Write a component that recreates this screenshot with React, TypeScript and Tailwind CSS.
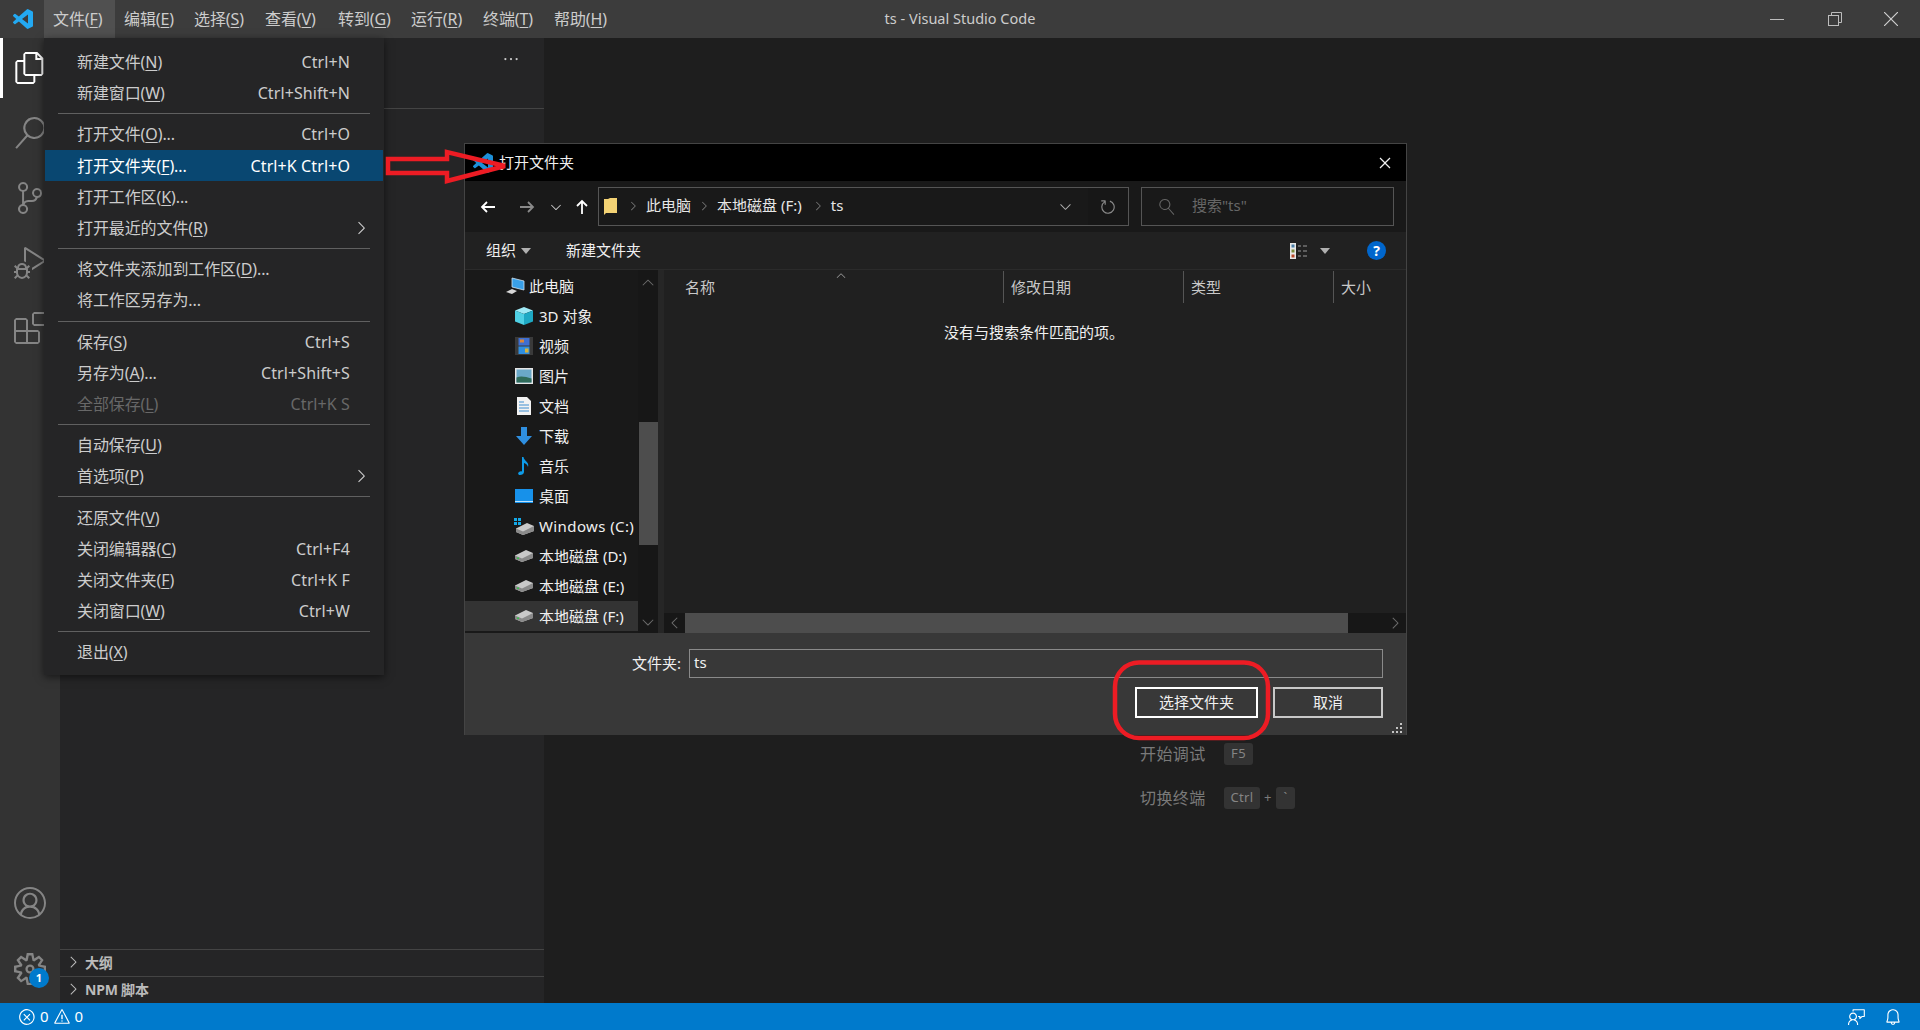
import type { ReactNode } from 'react';
import {
  VscAccount,
  VscBell,
  VscChevronDown,
  VscChevronLeft,
  VscChevronRight,
  VscChevronUp,
  VscClose,
  VscDebugAlt,
  VscEllipsis,
  VscError,
  VscExtensions,
  VscFeedback,
  VscFiles,
  VscRefresh,
  VscSearch,
  VscSettingsGear,
  VscSourceControl,
  VscWarning,
} from 'react-icons/vsc';

const FONT = 'font-["Noto_Sans","Noto_Sans_CJK_SC",sans-serif]';

const menuBar = [
  { label: '文件(F)', w: 'w-[71px]', active: true },
  { label: '编辑(E)', w: 'w-[70px]' },
  { label: '选择(S)', w: 'w-[71px]' },
  { label: '查看(V)', w: 'w-[73px]' },
  { label: '转到(G)', w: 'w-[73px]' },
  { label: '运行(R)', w: 'w-[72px]' },
  { label: '终端(T)', w: 'w-[71px]' },
  { label: '帮助(H)', w: 'w-[70px]' },
];

type MenuEntry = { label: string; key?: string; active?: boolean; disabled?: boolean; sub?: boolean } | 'sep';

const fileMenu: MenuEntry[] = [
  { label: '新建文件(N)', key: 'Ctrl+N' },
  { label: '新建窗口(W)', key: 'Ctrl+Shift+N' },
  'sep',
  { label: '打开文件(O)...', key: 'Ctrl+O' },
  { label: '打开文件夹(F)...', key: 'Ctrl+K Ctrl+O', active: true },
  { label: '打开工作区(K)...' },
  { label: '打开最近的文件(R)', sub: true },
  'sep',
  { label: '将文件夹添加到工作区(D)...' },
  { label: '将工作区另存为...' },
  'sep',
  { label: '保存(S)', key: 'Ctrl+S' },
  { label: '另存为(A)...', key: 'Ctrl+Shift+S' },
  { label: '全部保存(L)', key: 'Ctrl+K S', disabled: true },
  'sep',
  { label: '自动保存(U)' },
  { label: '首选项(P)', sub: true },
  'sep',
  { label: '还原文件(V)' },
  { label: '关闭编辑器(C)', key: 'Ctrl+F4' },
  { label: '关闭文件夹(F)', key: 'Ctrl+K F' },
  { label: '关闭窗口(W)', key: 'Ctrl+W' },
  'sep',
  { label: '退出(X)' },
];

function Mnemonic({ label }: { label: string }) {
  const m = label.match(/^(.*\()(\w)(\).*)$/);
  if (!m) return <>{label}</>;
  return (
    <>
      {m[1]}
      <u className="underline-offset-2">{m[2]}</u>
      {m[3]}
    </>
  );
}

function VsLogo({ className }: { className: string }) {
  return (
    <svg viewBox="0 0 24 24" className={className} fill="currentColor">
      <path d="M23.15 2.587L18.21.21a1.494 1.494 0 0 0-1.705.29l-9.46 8.63-4.12-3.128a.999.999 0 0 0-1.276.057L.327 7.261A1 1 0 0 0 .326 8.74L3.899 12 .326 15.26a1 1 0 0 0 .001 1.479L1.65 17.94a.999.999 0 0 0 1.276.057l4.12-3.128 9.46 8.63a1.492 1.492 0 0 0 1.704.29l4.942-2.377A1.5 1.5 0 0 0 24 20.06V3.939a1.5 1.5 0 0 0-.85-1.352zm-5.146 14.861L10.826 12l7.178-5.448v10.896z" />
    </svg>
  );
}

function TitleBar() {
  return (
    <div className="relative flex h-[38px] shrink-0 items-center bg-[#3c3c3c] text-[#cccccc]">
      <div className="flex w-[44px] justify-center pl-[1px]">
        <VsLogo className="h-[20px] w-[20px] text-[#23a9f2]" />
      </div>
      {menuBar.map((m) => (
        <div
          key={m.label}
          className={`flex h-full items-center pl-[9px] text-[16px] tracking-[-0.1px] ${m.w} ${m.active ? 'bg-[#505050]' : ''}`}
        >
          <Mnemonic label={m.label} />
        </div>
      ))}
      <div className="absolute left-[880px] w-[160px] pb-[1px] text-center text-[14.5px] whitespace-nowrap">ts - Visual Studio Code</div>
      <div className="ml-auto flex items-center">
        <svg viewBox="0 0 14 14" className="mr-[44px] h-[14px] w-[14px]" stroke="#bdbdbd" fill="none">
          <path d="M0 7.5h14" />
        </svg>
        <svg viewBox="0 0 14 14" className="mr-[42px] h-[14px] w-[14px]" stroke="#bdbdbd" fill="none">
          <rect x=".5" y="3.5" width="10" height="10" />
          <path d="M3.5 3.5v-3h10v10h-3" />
        </svg>
        <svg viewBox="0 0 14 14" className="mr-[22px] h-[14px] w-[14px]" stroke="#cfcfcf" strokeWidth="1.2" fill="none">
          <path d="M0 0l14 14M14 0L0 14" />
        </svg>
      </div>
    </div>
  );
}

function ActivityBar() {
  return (
    <div className="relative flex w-[60px] shrink-0 flex-col items-center bg-[#333333] text-[#858585]">
      <div className="absolute top-0 left-0 h-[60px] w-[3px] bg-white" />
      <VscFiles className="mt-[14px] text-white" size={32} />
      <VscSearch className="mt-[33px]" size={32} />
      <VscSourceControl className="mt-[33px]" size={32} />
      <VscDebugAlt className="mt-[33px]" size={32} />
      <VscExtensions className="mt-[33px]" size={32} />
      <VscAccount className="mt-auto" size={32} />
      <div className="relative mt-[34px] mb-[18px]">
        <VscSettingsGear size={32} />
        <div className="absolute top-[15px] left-[15px] flex h-[20px] w-[20px] items-center justify-center rounded-full bg-[#007acc] text-[11px] font-bold text-white">
          1
        </div>
      </div>
    </div>
  );
}

function SideSection({ label }: { label: string }) {
  return (
    <div className="flex h-[27px] items-center border-t border-[#444444] pb-[2px] pl-[4px] text-[14px] font-bold text-[#bbbbbb]">
      <VscChevronRight size={18} />
      <span className="ml-[3px] tracking-[-0.2px]">{label}</span>
    </div>
  );
}

function SideBar() {
  return (
    <div className="flex w-[484px] shrink-0 flex-col bg-[#252526]">
      <div className="flex h-[71px] justify-end border-b border-[#444444] pt-[12px] pr-[24px] text-[#cccccc]">
        <VscEllipsis size={18} />
      </div>
      <div className="flex-1" />
      <SideSection label="大纲" />
      <SideSection label="NPM 脚本" />
    </div>
  );
}

function Kbd({ children, className }: { children: ReactNode; className: string }) {
  return (
    <span className={`flex h-[22px] items-center justify-center rounded-[3px] bg-[#333333] text-[13px] text-[#858585] ${className}`}>
      {children}
    </span>
  );
}

function Editor() {
  return (
    <div className="flex-1 bg-[#1e1e1e] pt-[705px] pl-[596px] text-[16px] tracking-[0.4px] text-[#7a7a7a]">
      <div className="flex h-[22px] items-center">
        <span className="w-[84px]">开始调试</span>
        <Kbd className="w-[29px]">F5</Kbd>
      </div>
      <div className="mt-[22px] flex h-[22px] items-center">
        <span className="w-[84px]">切换终端</span>
        <Kbd className="w-[36px]">Ctrl</Kbd>
        <span className="w-[16px] text-center text-[13px]">+</span>
        <Kbd className="w-[19px]">`</Kbd>
      </div>
    </div>
  );
}

function StatusBar() {
  return (
    <div className="flex h-[27px] shrink-0 items-center bg-[#007acc] pl-[18px] text-[15px] text-white">
      <VscError size={18} />
      <span className="ml-[4px]">0</span>
      <VscWarning className="ml-[4px]" size={18} />
      <span className="ml-[4px]">0</span>
      <VscFeedback className="ml-auto" size={18} />
      <VscBell className="mr-[18px] ml-[18px]" size={18} />
    </div>
  );
}

function FileMenu() {
  return (
    <div className="absolute top-[38px] left-[44px] flex h-[637px] w-[340px] flex-col bg-[#252526] pt-[8.5px] text-[16px] tracking-[-0.1px] text-[#cccccc] shadow-[0_2px_8px_rgba(0,0,0,0.55)]">
      {fileMenu.map((item, i) =>
        item === 'sep' ? (
          <div key={i} className="flex h-[10px] items-center px-[14px]">
            <div className="h-px w-full bg-[#606060]" />
          </div>
        ) : (
          <div
            key={i}
            className={`relative mx-px flex h-[31.2px] items-center justify-between pr-[33px] pl-[32px] whitespace-nowrap ${
              item.active ? 'bg-[#094771] text-white' : ''
            } ${item.disabled ? 'text-[#686868]' : ''}`}
          >
            <span>
              <Mnemonic label={item.label} />
            </span>
            {item.key && <span className="text-[16px] tracking-[0.1px]">{item.key}</span>}
            {item.sub && <VscChevronRight className="absolute right-[12px]" size={20} />}
          </div>
        ),
      )}
    </div>
  );
}

const icons: Record<string, ReactNode> = {
  pc: (
    <svg viewBox="0 0 20 18" className="h-[18px] w-[20px]">
      <path d="M6 1l12 3v9L6 10z" fill="#39a0e8" stroke="#cfe3f2" strokeWidth=".8" />
      <path d="M0 15l6-3 5 2-5 3z" fill="#d8d8d8" />
    </svg>
  ),
  cube: (
    <svg viewBox="0 0 18 18" className="h-[18px] w-[18px]">
      <path d="M9 0l9 3.5L9 7 0 3.5z" fill="#9fe9f5" />
      <path d="M0 3.5L9 7v11l-9-3.5z" fill="#4fd0e4" />
      <path d="M18 3.5L9 7v11l9-3.5z" fill="#1ea9c4" />
    </svg>
  ),
  video: (
    <svg viewBox="0 0 18 18" className="h-[18px] w-[18px]">
      <rect width="18" height="18" fill="#3a3a3a" />
      <rect x="3.5" y="1" width="11" height="7.5" fill="#3f6fd1" />
      <rect x="3.5" y="9.5" width="11" height="7.5" fill="#2f8fe0" />
      <rect x="5" y="2.5" width="4" height="3" fill="#d9863a" />
      <rect x="10" y="11.5" width="3.5" height="4" fill="#d9b33a" />
    </svg>
  ),
  picture: (
    <svg viewBox="0 0 18 16" className="h-[16px] w-[18px]">
      <rect width="18" height="16" fill="#e6e6e6" />
      <rect x="1.5" y="1.5" width="15" height="13" fill="#6aa8c9" />
      <path d="M1.5 9.5c4-2 9-1 15 1v4h-15z" fill="#2f6b5a" />
    </svg>
  ),
  doc: (
    <svg viewBox="0 0 14 18" className="h-[18px] w-[14px]">
      <path d="M0 0h10l4 4v14H0z" fill="#f2f2f2" />
      <path d="M2 5h5M2 8h10M2 11h10M2 14h10" stroke="#3e8ed0" strokeWidth="1" />
    </svg>
  ),
  down: (
    <svg viewBox="0 0 16 18" className="h-[18px] w-[16px]">
      <path d="M5 0h6v9h5l-8 9-8-9h5z" fill="#2f8fe0" />
    </svg>
  ),
  music: (
    <svg viewBox="0 0 12 18" className="h-[18px] w-[12px]">
      <path d="M4 0h1.500c.5 4 6 5 4.500 10-.5-2.500-2.500-3.500-4-4v9c0 2-2 3-4 3s-2.500-2-1-3c1-.7 2-.8 3-.5z" fill="#0e9be8" />
    </svg>
  ),
  desktop: (
    <svg viewBox="0 0 18 14" className="h-[14px] w-[18px]">
      <rect width="18" height="14" fill="#1791ea" />
      <path d="M0 12.500h18" stroke="#bfe3fa" strokeWidth="1" />
    </svg>
  ),
  drive: (
    <svg viewBox="0 0 18 12" className="h-[12px] w-[18px]">
      <path d="M0 5.500L11 0l7 3v5L7 12 0 9z" fill="#c9c9c9" />
      <path d="M0 5.500l7 3 11-5.500v5L7 12 0 9z" fill="#8a8a8a" />
      <rect x="2" y="7.500" width="2" height="1.500" fill="#35c24a" />
    </svg>
  ),
  win: (
    <svg viewBox="0 0 20 18" className="h-[18px] w-[20px]">
      <path d="M0 1h3v3H0zM4 1h3v3H4zM0 5h3v3H0zM4 5h3v3H4z" fill="#14a9e8" />
      <path d="M2 11.500L13 6l7 3v5l-11 4-7-3z" fill="#c9c9c9" />
      <path d="M2 11.500l7 3 11-5.500v5L9 18l-7-3z" fill="#8a8a8a" />
    </svg>
  ),
};

const navItems = [
  { label: '此电脑', icon: 'pc', top: true },
  { label: '3D 对象', icon: 'cube' },
  { label: '视频', icon: 'video' },
  { label: '图片', icon: 'picture' },
  { label: '文档', icon: 'doc' },
  { label: '下载', icon: 'down' },
  { label: '音乐', icon: 'music' },
  { label: '桌面', icon: 'desktop' },
  { label: 'Windows (C:)', icon: 'win' },
  { label: '本地磁盘 (D:)', icon: 'drive' },
  { label: '本地磁盘 (E:)', icon: 'drive' },
  { label: '本地磁盘 (F:)', icon: 'drive', active: true },
];

function Crumb({ label }: { label: string }) {
  return (
    <>
      <VscChevronRight className="mx-[3px] text-[#7a7a7a]" size={14} />
      <span className="mx-[3px]">{label}</span>
    </>
  );
}

function Caret() {
  return (
    <svg viewBox="0 0 10 6" className="h-[6px] w-[10px]" fill="#b0b0b0">
      <path d="M0 0h10L5 6z" />
    </svg>
  );
}

function ArrowIcon({ d, color }: { d: string; color: string }) {
  return (
    <svg viewBox="0 0 16 16" className="h-[16px] w-[16px]" fill="none" stroke={color} strokeWidth="1.800">
      <path d={d} />
    </svg>
  );
}

function Dialog() {
  return (
    <div className="absolute top-[143px] left-[464px] flex h-[592px] w-[943px] flex-col border border-b-0 border-[#444444] bg-[#202020] text-[15px] text-[#f0f0f0]">
      {/* title */}
      <div className="flex h-[37px] shrink-0 items-center bg-black pl-[8px] text-[15px]">
        <VsLogo className="h-[20px] w-[20px] text-[#1d8fd8]" />
        <span className="ml-[6px]">打开文件夹</span>
        <VscClose className="mr-[11px] ml-auto" size={20} />
      </div>

      {/* address row */}
      <div className="flex h-[51px] shrink-0 items-center bg-[#191919] pl-[15px]">
        <ArrowIcon d="M15 8H2M7 3L2 8l5 5" color="#ffffff" />
        <span className="ml-[23px]">
          <ArrowIcon d="M1 8h13M9 3l5 5-5 5" color="#8a8a8a" />
        </span>
        <VscChevronDown className="ml-[13px] text-[#d0d0d0]" size={16} />
        <span className="ml-[10px]">
          <ArrowIcon d="M8 15V2M3 7l5-5 5 5" color="#ffffff" />
        </span>
        <div className="ml-[8px] flex h-[39px] w-[531px] items-center border border-[#555555] pl-[5px] text-[#e6e6e6]">
          <svg viewBox="0 0 13 17" className="mr-[6px] h-[17px] w-[13px]">
            <path d="M0 1h4l2-1h7v15H2l-2 2z" fill="#f3d274" />
          </svg>
          <span className="flex items-center pb-[2px]">
            <Crumb label="此电脑" />
            <Crumb label="本地磁盘 (F:)" />
            <span className="flex items-center pl-[3px]">
              <Crumb label="ts" />
            </span>
          </span>
          <VscChevronDown className="mr-[14px] ml-auto text-[#b0b0b0]" size={17} />
          <div className="flex h-full w-[40px] items-center justify-center bg-[#171717] text-[#8a8a8a]">
            <VscRefresh size={18} />
          </div>
        </div>
        <div className="ml-[12px] flex h-[39px] w-[253px] items-center border border-[#555555] pl-[17px] text-[#666666]">
          <VscSearch className="-scale-x-100" size={16} />
          <span className="ml-[17px] pb-[2px]">搜索"ts"</span>
        </div>
      </div>

      {/* toolbar */}
      <div className="flex h-[38px] shrink-0 items-center border-b border-[#2b2b2b] bg-[#212121] pl-[21px]">
        <span>组织</span>
        <span className="ml-[5px]">
          <Caret />
        </span>
        <span className="ml-[35px]">新建文件夹</span>
        <svg viewBox="0 0 18 16" className="ml-auto h-[16px] w-[18px]">
          <rect x="0" y="0" width="6" height="16" fill="#e8e8e8" />
          <rect x="1.500" y="1.500" width="3" height="3" fill="#4a7fa8" />
          <rect x="1.500" y="6.500" width="3" height="3" fill="#7a8a3a" />
          <rect x="1.500" y="11.500" width="3" height="3" fill="#b84a2a" />
          <path d="M8 3h3M13 3h4M8 8h3M13 8h4M8 13h3M13 13h4" stroke="#9a9a9a" />
        </svg>
        <span className="ml-[12px]">
          <Caret />
        </span>
        <div className="mr-[20px] ml-[37px] flex h-[19px] w-[19px] items-center justify-center rounded-full bg-[#0066cc] text-[14px] font-bold text-white">
          ?
        </div>
      </div>

      {/* panes */}
      <div className="flex min-h-0 flex-1">
        <div className="flex w-[193px] shrink-0 bg-[#191919]">
          <div className="w-[173px] pt-[1px]">
            {navItems.map((n) => (
              <div key={n.label} className={`flex h-[30px] items-center whitespace-nowrap ${n.active ? 'bg-[#333333]' : ''}`}>
                <div className={`flex w-[20px] justify-center ${n.top ? 'ml-[41px]' : 'ml-[49px]'}`}>{icons[n.icon]}</div>
                <span className={n.top ? 'ml-[3px]' : n.icon === 'win' ? 'ml-[5px] tracking-[0.4px]' : 'ml-[5px]'}>{n.label}</span>
              </div>
            ))}
          </div>
          <div className="flex w-[20px] flex-col items-center bg-[#171717] text-[#6b6b6b]">
            <VscChevronUp className="mt-[4px]" size={18} />
            <div className="mt-[130px] h-[123px] w-[19px] bg-[#4d4d4d]" />
            <VscChevronDown className="mt-auto mb-[2px]" size={18} />
          </div>
        </div>
        <div className="w-[6px] bg-[#262626]" />
        <div className="flex min-w-0 flex-1 flex-col">
          <div className="flex h-[33px] shrink-0 pt-[1px] text-[#c8c8c8]">
            <div className="relative flex w-[339px] items-center pl-[21px]">
              名称
              <VscChevronUp className="absolute top-[-2px] left-[170px] text-[#9a9a9a]" size={14} />
            </div>
            <div className="flex w-[180px] items-center border-l border-[#555555] pl-[7px]">修改日期</div>
            <div className="flex w-[150px] items-center border-l border-[#555555] pl-[7px]">类型</div>
            <div className="flex flex-1 items-center border-l border-[#555555] pl-[7px]">大小</div>
          </div>
          <div className="flex-1 pt-[19px] pl-[280px] leading-[20px]">没有与搜索条件匹配的项。</div>
          <div className="flex h-[20px] shrink-0 items-center bg-[#171717] text-[#6b6b6b]">
            <div className="flex w-[21px] justify-center">
              <VscChevronLeft size={18} />
            </div>
            <div className="h-full w-[663px] bg-[#4d4d4d]" />
            <VscChevronRight className="mr-[2px] ml-auto" size={18} />
          </div>
        </div>
      </div>

      {/* footer */}
      <div className="flex h-[102px] shrink-0 flex-col bg-[#383838] pr-[23px]">
        <div className="mt-[16px] flex items-center justify-end">
          <span className="mr-[8px]">文件夹:</span>
          <div className="flex h-[29px] w-[694px] items-center border border-[#8a8a8a] pb-[3px] pl-[4px]">ts</div>
        </div>
        <div className="mt-[9px] flex justify-end">
          <div className="flex h-[31px] w-[123px] items-center justify-center border-2 border-white">选择文件夹</div>
          <div className="ml-[15px] flex h-[31px] w-[110px] items-center justify-center border-2 border-[#c8c8c8]">取消</div>
        </div>
      </div>
      <svg viewBox="0 0 10 10" className="absolute right-[4px] bottom-[2px] h-[10px] w-[10px]" fill="#c4c4c4">
        <path d="M8 0h2v2H8zM4 4h2v2H4zM8 4h2v2H8zM0 8h2v2H0zM4 8h2v2H4zM8 8h2v2H8z" />
      </svg>
    </div>
  );
}

function Marks() {
  return (
    <svg className="pointer-events-none absolute top-0 left-0 h-[1030px] w-[1920px]" viewBox="0 0 1920 1030" fill="none" stroke="#ed1c24" strokeWidth="4.500">
      <path d="M388 159h59v-7l58 14-58 15v-8h-59z" />
      <rect x="1115" y="662.500" width="153" height="75.500" rx="24" />
    </svg>
  );
}

export default function App() {
  return (
    <div className={`relative flex h-[1030px] w-[1920px] flex-col overflow-hidden bg-[#1e1e1e] ${FONT}`}>
      <TitleBar />
      <div className="flex min-h-0 flex-1">
        <ActivityBar />
        <SideBar />
        <Editor />
      </div>
      <StatusBar />
      <FileMenu />
      <Dialog />
      <Marks />
    </div>
  );
}
